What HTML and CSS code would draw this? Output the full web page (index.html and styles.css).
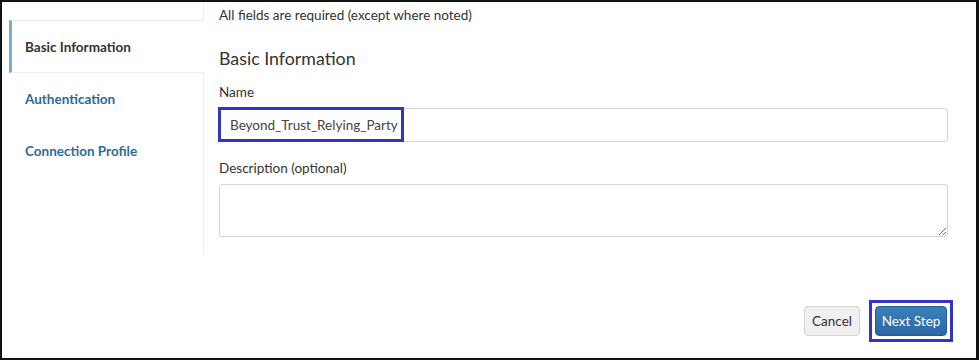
FILE: index.html
```html
<!DOCTYPE html>
<html>
<head>
<meta charset="utf-8">
<link rel="stylesheet" href="styles.css">
</head>
<body>
<div class="frame">
  <div class="wizard">
    <ul class="tabs">
      <li class="tab active">Basic Information</li>
      <li class="tab">Authentication</li>
      <li class="tab">Connection Profile</li>
    </ul>
    <div class="content">
      <p class="note">All fields are required (except where noted)</p>
      <h3 class="section-title">Basic Information</h3>
      <div class="field">
        <label class="label">Name</label>
        <div class="input-wrap">
          <input class="input" type="text" value="Beyond_Trust_Relying_Party">
          <span class="mark mark-name"></span>
        </div>
      </div>
      <div class="field">
        <label class="label">Description (optional)</label>
        <textarea class="textarea"></textarea>
      </div>
    </div>
  </div>
  <div class="actions">
    <button class="btn btn-default">Cancel</button>
    <span class="btn-mark"><button class="btn btn-primary">Next Step</button></span>
  </div>
</div>
</body>
</html>
```

FILE: styles.css
```css
html, body {
  margin: 0;
  padding: 0;
  background: #fff;
}
body {
  font-family: Lato, "Open Sans", sans-serif;
  font-size: 13.5px;
  color: #333;
}
.frame {
  width: 979px;
  height: 360px;
  box-sizing: border-box;
  border: 2px solid #111;
  border-right-width: 3px;
  border-bottom-width: 2px;
  display: flex;
  flex-direction: column;
  overflow: hidden;
}
.wizard {
  display: flex;
  padding-left: 7px;
  height: 251px;
}
.tabs {
  list-style: none;
  margin: 0;
  padding: 18px 0 0 0;
  width: 194px;
  border-right: 1px solid #eee;
  flex: none;
}
.tab {
  height: 52px;
  box-sizing: border-box;
  display: flex;
  align-items: center;
  padding-left: 14px;
  font-weight: 700;
  color: #2d6a9b;
  border-left: 2px solid transparent;
}
.tab.active {
  color: #333;
  padding-left: 13px;
  border-left: 3px solid #7aaccc;
  border-top: 1px solid #eee;
  border-bottom: 1px solid #eee;
  background: #fff;
  margin-right: -1px;
  position: relative;
  height: 53px;
}
.content {
  flex: 1;
  padding: 0 28px 0 15px;
}
.note {
  margin: 4px 0 0 0;
  line-height: 18px;
}
.section-title {
  margin: 22px 0 0 0;
  font-size: 17.8px;
  font-weight: 400;
  line-height: 24px;
  color: #333;
}
.field {
  margin-top: 13px;
}
.field + .field {
  margin-top: 17px;
}
.label {
  display: block;
  line-height: 18px;
  margin-bottom: 7px;
}
.input-wrap {
  position: relative;
}
.input {
  display: block;
  width: 100%;
  box-sizing: border-box;
  height: 34px;
  border: 1px solid #d3d6da;
  border-radius: 3px;
  padding: 0 10px;
  font-family: Lato, "Open Sans", sans-serif;
  font-size: 13.5px;
  color: #444;
  background: #fff;
}
.mark {
  position: absolute;
  border: 3px solid #3333c4;
  pointer-events: none;
}
.mark-name {
  left: -1px;
  top: -1px;
  width: 180px;
  height: 29px;
}
.textarea {
  display: block;
  width: 100%;
  box-sizing: border-box;
  height: 53px;
  border: 1px solid #d3d6da;
  border-radius: 3px;
  resize: vertical;
  font-family: Lato, "Open Sans", sans-serif;
}
.actions {
  display: flex;
  justify-content: flex-end;
  align-items: center;
  gap: 9px;
  padding: 47px 23px 0 0;
}
.btn {
  font-family: Lato, "Open Sans", sans-serif;
  font-size: 13.5px;
  height: 30px;
  border-radius: 4px;
  padding: 0 9px;
  cursor: pointer;
}
.btn-default {
  background: #f0f0f0;
  border: 1px solid #d4d4d4;
  color: #333;
  width: 56px;
  padding: 0;
}
.btn-primary {
  background: linear-gradient(#3a7fbd, #2a68a3);
  border: 1px solid #245d93;
  color: #fff;
  width: 72px;
  padding: 0;
}
.btn-mark {
  display: inline-flex;
  border: 3px solid #3333c4;
  padding: 3px;
}
```
